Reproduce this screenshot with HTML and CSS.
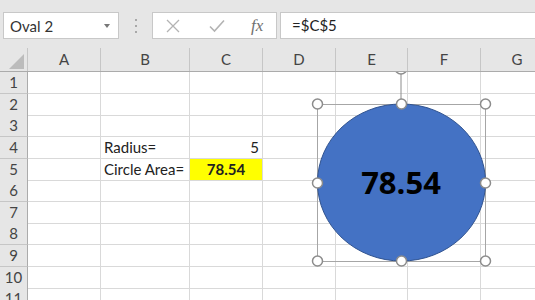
FILE: index.html
```html
<!DOCTYPE html>
<html>
<head>
<meta charset="utf-8">
<link rel="stylesheet" href="styles.css">
</head>
<body>
<div class="app">
  <div class="toolbar">
    <div class="namebox">
      <span class="name">Oval 2</span>
      <span class="dd"></span>
    </div>
    <div class="sep"><i></i><i></i><i></i></div>
    <div class="fbtns">
      <svg class="ic-x" width="14" height="14" viewBox="0 0 14 14"><path d="M1 1L13 13M13 1L1 13" stroke="#b3b3b3" stroke-width="1.3" fill="none"/></svg>
      <svg class="ic-ok" width="16" height="14" viewBox="0 0 16 14"><path d="M1 7.5L5.5 12L15 1.5" stroke="#b3b3b3" stroke-width="1.6" fill="none"/></svg>
      <span class="fx">fx</span>
    </div>
    <div class="finput">=$C$5</div>
  </div>
  <div class="sheet">
    <div class="hdr">
      <div class="corner"><span class="tri"></span></div>
      <div class="ch">A</div><div class="ch">B</div><div class="ch">C</div><div class="ch">D</div><div class="ch">E</div><div class="ch">F</div><div class="ch">G</div>
    </div>
    <div class="body">
      <div class="row h22"><div class="rh">1</div><div class="c"></div><div class="c"></div><div class="c"></div><div class="c"></div><div class="c"></div><div class="c"></div><div class="c"></div></div>
      <div class="row h21"><div class="rh">2</div><div class="c"></div><div class="c"></div><div class="c"></div><div class="c"></div><div class="c"></div><div class="c"></div><div class="c"></div></div>
      <div class="row h22"><div class="rh">3</div><div class="c"></div><div class="c"></div><div class="c"></div><div class="c"></div><div class="c"></div><div class="c"></div><div class="c"></div></div>
      <div class="row h22"><div class="rh">4</div><div class="c"></div><div class="c txt">Radius=</div><div class="c num">5</div><div class="c"></div><div class="c"></div><div class="c"></div><div class="c"></div></div>
      <div class="row h21"><div class="rh">5</div><div class="c"></div><div class="c txt">Circle Area=</div><div class="c res">78.54</div><div class="c"></div><div class="c"></div><div class="c"></div><div class="c"></div></div>
      <div class="row h22"><div class="rh">6</div><div class="c"></div><div class="c"></div><div class="c"></div><div class="c"></div><div class="c"></div><div class="c"></div><div class="c"></div></div>
      <div class="row h21"><div class="rh">7</div><div class="c"></div><div class="c"></div><div class="c"></div><div class="c"></div><div class="c"></div><div class="c"></div><div class="c"></div></div>
      <div class="row h22"><div class="rh">8</div><div class="c"></div><div class="c"></div><div class="c"></div><div class="c"></div><div class="c"></div><div class="c"></div><div class="c"></div></div>
      <div class="row h22"><div class="rh">9</div><div class="c"></div><div class="c"></div><div class="c"></div><div class="c"></div><div class="c"></div><div class="c"></div><div class="c"></div></div>
      <div class="row h21"><div class="rh">10</div><div class="c"></div><div class="c"></div><div class="c"></div><div class="c"></div><div class="c"></div><div class="c"></div><div class="c"></div></div>
      <div class="row h22"><div class="rh">11</div><div class="c"></div><div class="c"></div><div class="c"></div><div class="c"></div><div class="c"></div><div class="c"></div><div class="c"></div></div>
      <svg class="shape" width="535" height="240" viewBox="0 0 535 240">
        <line x1="401" y1="2" x2="401" y2="32" stroke="#8c8c8c" stroke-width="1"/>
        <circle cx="401" cy="-4" r="6" fill="#fff" stroke="#8c8c8c" stroke-width="1.5"/>
        <rect x="317.5" y="32.5" width="168" height="157" fill="none" stroke="#a6a6a6" stroke-width="1"/>
        <ellipse cx="401.5" cy="110.5" rx="84" ry="78.5" fill="#4472c4" stroke="#2f528f" stroke-width="1"/>
        <text x="401" y="122" text-anchor="middle" class="otext">78.54</text>
        <g fill="#fff" stroke="#8c8c8c" stroke-width="1.5">
          <circle cx="317.5" cy="32" r="5"/>
          <circle cx="401.5" cy="32" r="5"/>
          <circle cx="485.5" cy="32" r="5"/>
          <circle cx="317.5" cy="111" r="5"/>
          <circle cx="485.5" cy="111" r="5"/>
          <circle cx="317.5" cy="189" r="5"/>
          <circle cx="401.5" cy="189" r="5"/>
          <circle cx="485.5" cy="189" r="5"/>
        </g>
      </svg>
    </div>
  </div>
</div>
</body>
</html>
```

FILE: styles.css
```css
* { box-sizing: border-box; }
html, body { margin: 0; padding: 0; }
body {
  width: 535px;
  height: 300px;
  overflow: hidden;
  background: #fff;
  font-family: Lato, "Open Sans", sans-serif;
  color: #222;
}
.app { width: 535px; height: 300px; overflow: hidden; }

.toolbar {
  height: 48px;
  background: #e6e6e6;
  display: flex;
  align-items: flex-start;
  padding-top: 12px;
  padding-left: 3px;
}
.namebox {
  width: 116px;
  height: 27px;
  background: #fff;
  border: 1px solid #c8c8c8;
  display: flex;
  align-items: center;
  padding-left: 6px;
  padding-right: 8px;
  justify-content: space-between;
}
.name { font-size: 15px; color: #333; }
.dd {
  width: 0; height: 0;
  border-left: 3.5px solid transparent;
  border-right: 3.5px solid transparent;
  border-top: 4px solid #777;
}
.sep {
  width: 33px;
  height: 27px;
  display: flex;
  flex-direction: column;
  align-items: center;
  justify-content: center;
  gap: 4px;
}
.sep i {
  display: block;
  width: 2px; height: 2px;
  background: #a8a8a8;
}
.fbtns {
  width: 125px;
  height: 27px;
  background: #fff;
  border: 1px solid #c8c8c8;
  display: flex;
  align-items: center;
  padding-left: 13px;
}
.ic-ok { margin-left: 29px; }
.fx {
  margin-left: 26px;
  font-family: "Liberation Serif", serif;
  font-style: italic;
  font-size: 17px;
  color: #6f6f6f;
}
.finput {
  margin-left: 3px;
  flex: 1;
  height: 27px;
  background: #fff;
  border: 1px solid #c8c8c8;
  border-right: none;
  padding-left: 11px;
  font-size: 15px;
  line-height: 25px;
  color: #222;
}

.sheet { position: relative; }
.hdr, .row {
  display: grid;
  grid-template-columns: 28px 73px 89px 73px 73px 72px 73px 73px;
}
.hdr { height: 24px; background: #e6e6e6; border-bottom: 1px solid #ababab; }
.corner { border-right: 1px solid #c6c6c6; position: relative; }
.tri {
  position: absolute;
  right: 3px; bottom: 2px;
  width: 0; height: 0;
  border-left: 15px solid transparent;
  border-bottom: 15px solid #bcbcbc;
}
.ch {
  border-right: 1px solid #c6c6c6;
  text-align: center;
  font-size: 15px;
  line-height: 23px;
  color: #444;
}
.body { position: relative; overflow: hidden; }
.h22 { height: 22px; }
.h21 { height: 21px; }
.rh {
  background: #e6e6e6;
  border-right: 1px solid #ababab;
  border-bottom: 1px solid #c6c6c6;
  text-align: center;
  font-size: 15px;
  color: #444;
  line-height: 21px;
}
.c {
  border-right: 1px solid #d9d9d9;
  border-bottom: 1px solid #d9d9d9;
  font-size: 15px;
  line-height: 21px;
  padding: 0 3px;
  white-space: nowrap;
}
.num { text-align: right; }
.res {
  background: #ffff00;
  font-weight: bold;
  text-align: center;
}
.shape {
  position: absolute;
  left: 0; top: 0;
  overflow: hidden;
}
.otext {
  font-family: "Open Sans", Lato, sans-serif;
  font-weight: bold;
  font-size: 31px;
  fill: #000;
}
```
